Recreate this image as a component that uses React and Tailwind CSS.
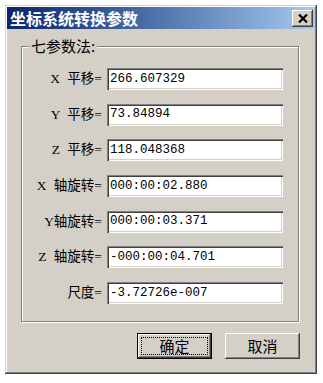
const rows = [
  ['X 平移=', '266.607329'],
  ['Y 平移=', '73.84894'],
  ['Z 平移=', '118.048368'],
  ['X 轴旋转=', '000:00:02.880'],
  ['Y轴旋转=', '000:00:03.371'],
  ['Z 轴旋转=', '-000:00:04.701'],
  ['尺度=', '-3.72726e-007']
];

const raised =
  'shadow-[inset_-1px_-1px_0_#404040,inset_1px_1px_0_#ffffff,inset_-2px_-2px_0_#808080,inset_2px_2px_0_#d4d0c8]';

const Field = ({ label, value }) => (
  <>
    <span className="text-right text-[13.5px] leading-[22px] text-black whitespace-pre [word-spacing:4px]">
      {label}
    </span>
    <div className="h-[22px] bg-white pl-[3px] flex items-center shadow-[inset_1px_1px_0_#808080,inset_2px_2px_0_#404040,inset_-1px_-1px_0_#ffffff,inset_-2px_-2px_0_#d4d0c8]">
      <span className="font-['Liberation_Mono',monospace] text-[12.5px] text-black">
        {value}
      </span>
    </div>
  </>
);

const App = () => {
  return (
    <div className="w-[323px] h-[383px] bg-white pt-[5px] pl-[5px] font-['Liberation_Serif','Noto_Sans_CJK_SC',serif]">
      <div className="w-[312px] h-[369px] bg-[#d4d0c8] p-[2px] shadow-[inset_-1px_-1px_0_#404040,inset_1px_1px_0_#d4d0c8,inset_-2px_-2px_0_#808080,inset_2px_2px_0_#ffffff]">
        <div className="h-[22px] flex items-center justify-between pl-[3px] pr-[2px] bg-linear-to-r from-[#0a246a] to-[#a6caf0]">
          <span className="text-white font-bold text-[16px] leading-none font-['Noto_Sans_CJK_SC',sans-serif]">
            坐标系统转换参数
          </span>
          <div className={`w-[21px] h-[17px] bg-[#d4d0c8] flex items-center justify-center ${raised}`}>
            <svg width="10" height="9" viewBox="0 0 10 9">
              <path d="M1 0.5 L9 8.5 M9 0.5 L1 8.5" stroke="#000" strokeWidth="2.2" />
            </svg>
          </div>
        </div>
        <div className="relative ml-[14px] mt-[17px] w-[278px] h-[276px] border border-[#808080] shadow-[1px_1px_0_#ffffff,inset_1px_1px_0_#ffffff]">
          <span className="absolute left-[7px] -top-[11px] bg-[#d4d0c8] px-[2px] text-[15px] leading-[20px] text-black font-['Noto_Sans_CJK_SC',sans-serif]">
            七参数法:
          </span>
          <div className="grid grid-cols-[80px_176px] gap-x-[5px] gap-y-[13.67px] pt-[21px]">
            {rows.map(([label, value]) => (
              <Field key={label} label={label} value={value} />
            ))}
          </div>
        </div>
        <div className="flex justify-end gap-[13px] w-[293px] mt-[11px]">
          <div className="w-[75px] h-[26px] bg-black p-[1px]">
            <div className={`w-full h-full bg-[#d4d0c8] p-[3px] ${raised}`}>
              <div className="w-full h-full border border-dotted border-black flex items-center justify-center text-[15px] text-black font-['Noto_Sans_CJK_SC',sans-serif]">
                确定
              </div>
            </div>
          </div>
          <div className={`w-[75px] h-[26px] bg-[#d4d0c8] flex items-center justify-center text-[15px] text-black font-['Noto_Sans_CJK_SC',sans-serif] ${raised}`}>
            取消
          </div>
        </div>
      </div>
    </div>
  );
};

export default App;
